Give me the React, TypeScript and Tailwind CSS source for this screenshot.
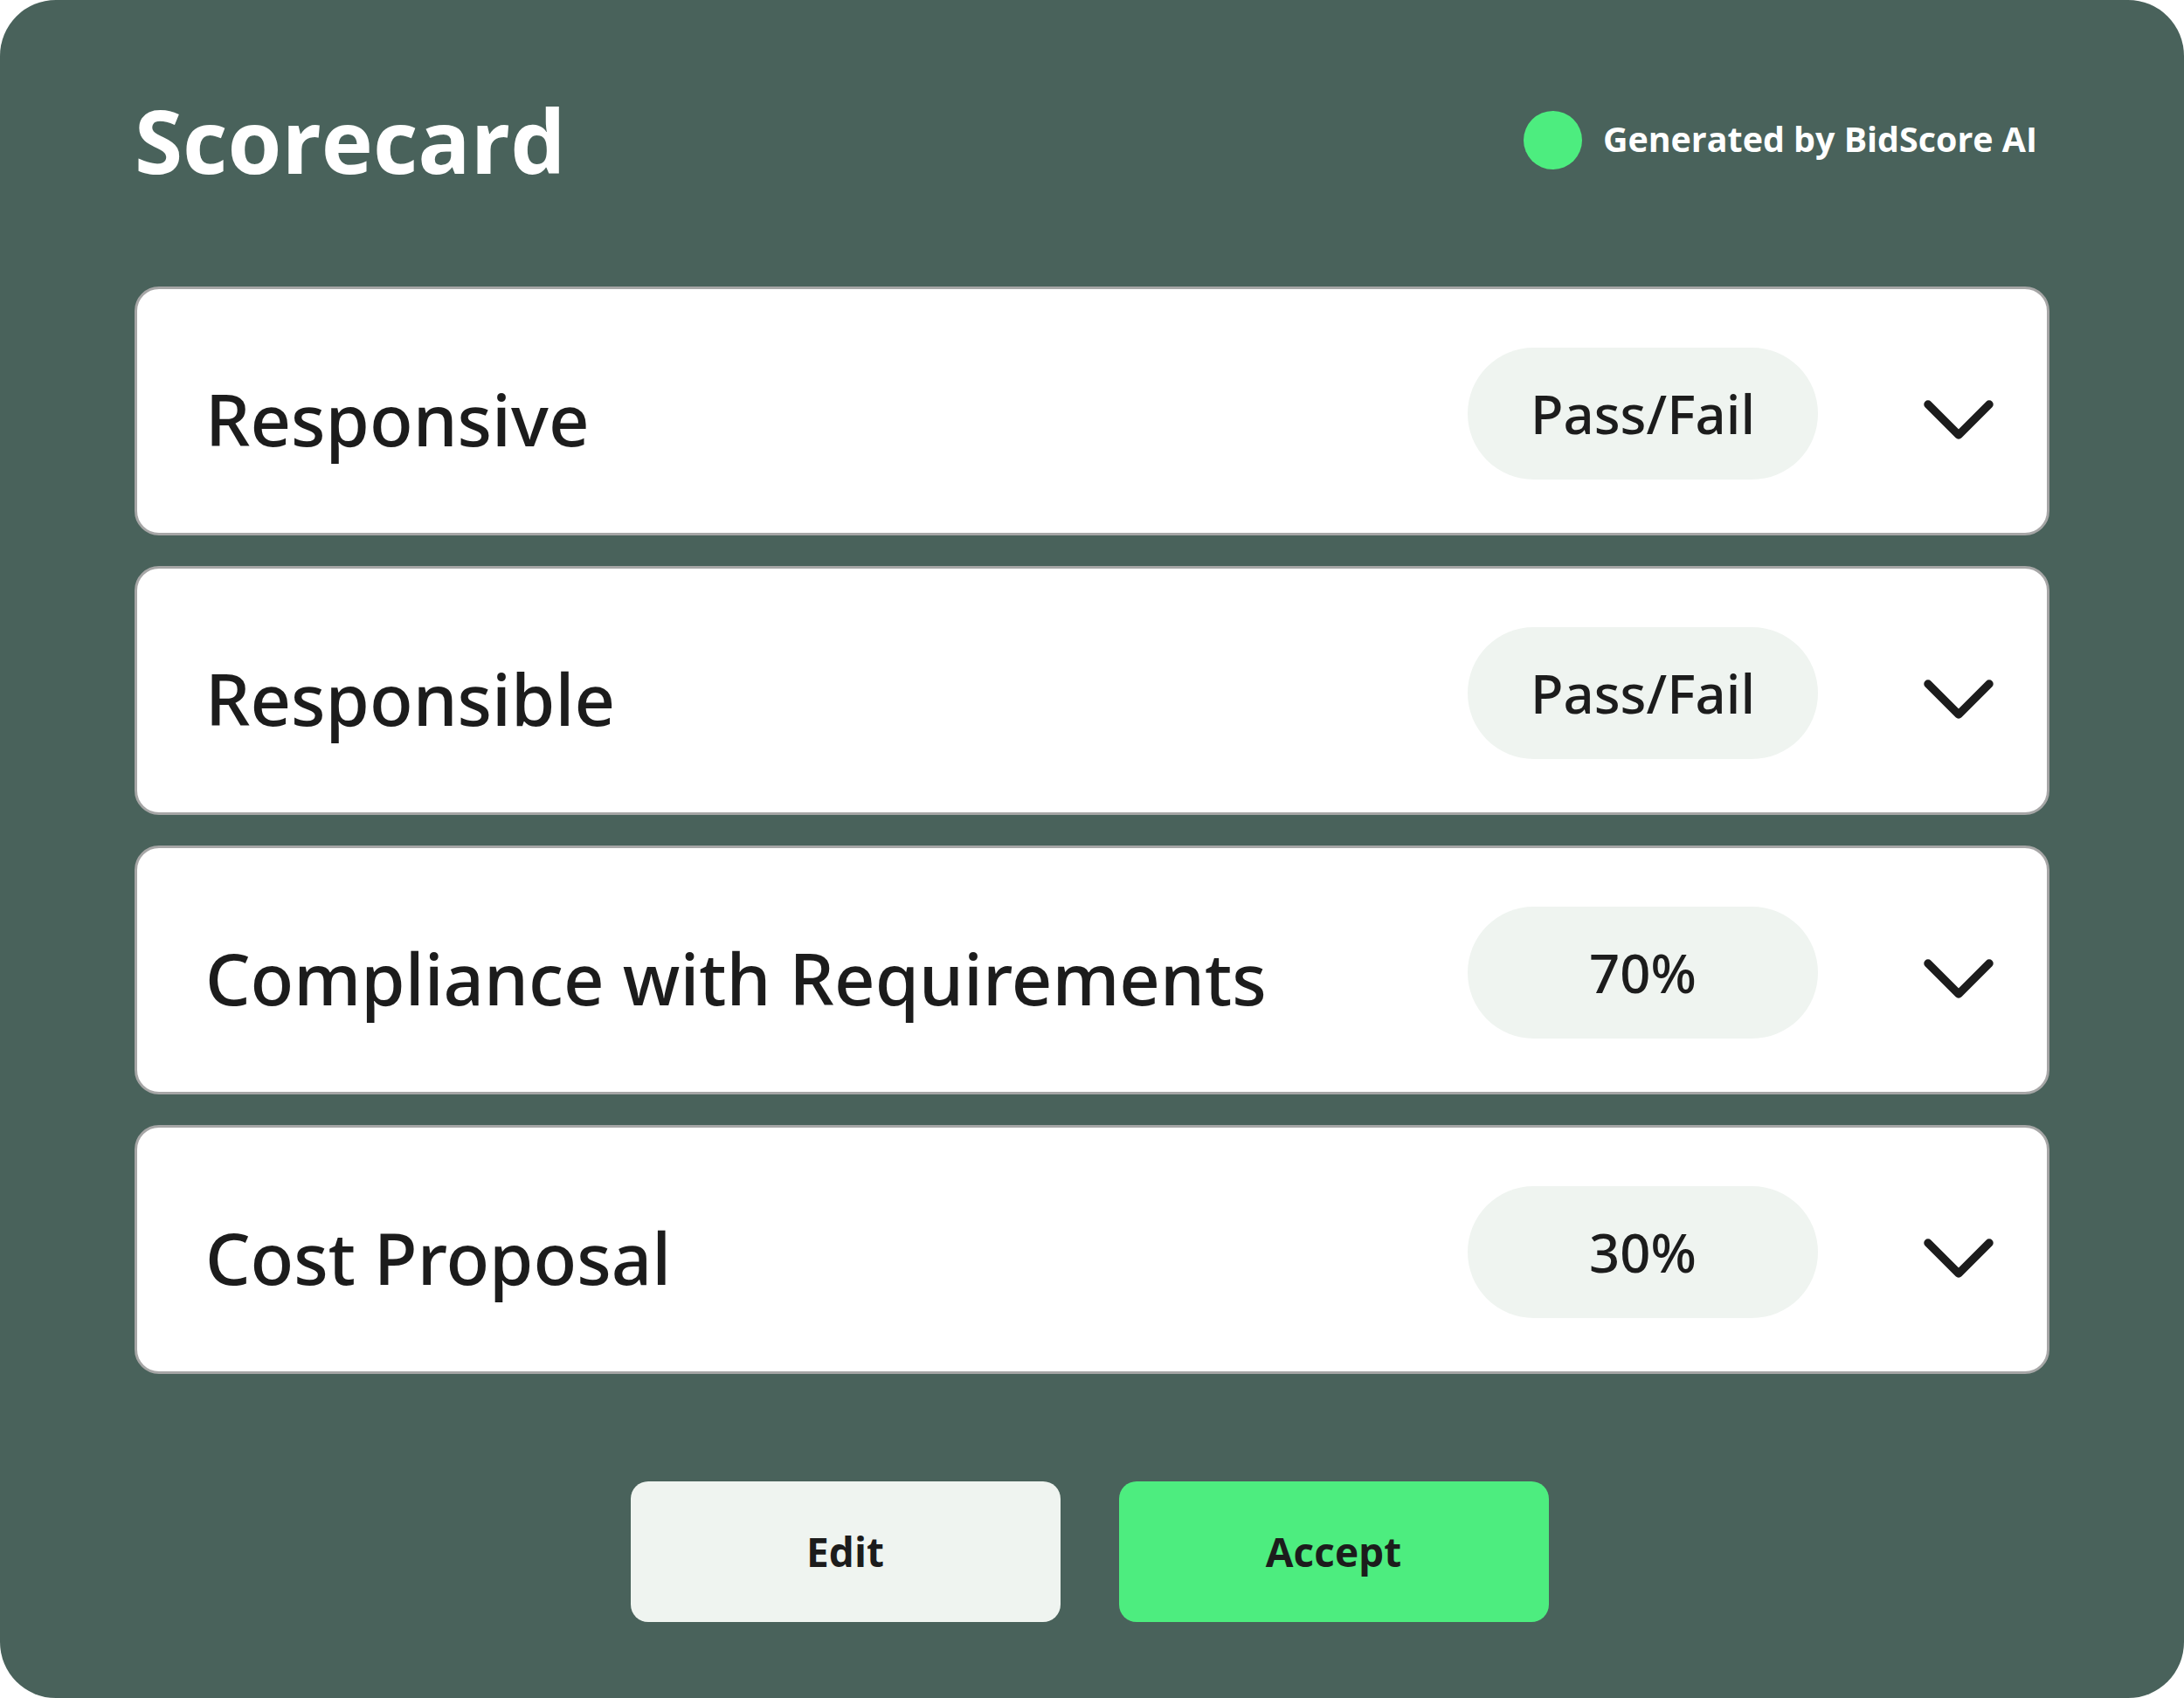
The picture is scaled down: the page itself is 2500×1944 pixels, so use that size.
import React from "react";

type Row = { label: string; value: string };

const rows: Row[] = [
  { label: "Responsive", value: "Pass/Fail" },
  { label: "Responsible", value: "Pass/Fail" },
  { label: "Compliance with Requirements", value: "70%" },
  { label: "Cost Proposal", value: "30%" },
];

function Chevron() {
  return (
    <svg
      width="80"
      height="46"
      viewBox="0 0 80 46"
      fill="none"
      className="mt-[21px] shrink-0"
    >
      <polyline
        points="5,5 40,40 75,5"
        stroke="#1c1c1c"
        strokeWidth="9.5"
        strokeLinecap="round"
        strokeLinejoin="round"
      />
    </svg>
  );
}

function ScoreRow({ label, value }: Row) {
  return (
    <div className="h-[285px] rounded-[28px] border-[3px] border-[#a6a6a6] bg-white flex items-center pl-[78px] pr-[61px]">
      <div className="flex-1 mt-[19px] font-['Noto_Sans',sans-serif] text-[81.3px] leading-none font-medium text-[#1c1c1c] whitespace-nowrap">
        {label}
      </div>
      <div className="mt-[6px] w-[401px] h-[151px] rounded-full bg-[#eff4f0] flex items-center justify-center font-['Noto_Sans',sans-serif] text-[61.5px] leading-none font-medium text-[#1c1c1c] shrink-0">
        {value}
      </div>
      <div className="w-[121px] shrink-0" />
      <Chevron />
    </div>
  );
}

export default function App() {
  return (
    <div className="w-[2500px] h-[1944px] bg-white font-['Open_Sans',sans-serif]">
      <div className="w-full h-full rounded-[64px] bg-[#49625b] px-[154px] pt-[100px] flex flex-col">
        <header className="h-[120px] flex items-center justify-between">
          <h1 className="text-[100px] leading-none font-bold text-white">
            Scorecard
          </h1>
          <div className="flex items-center gap-[24px] mr-[14px]">
            <span className="w-[67px] h-[67px] rounded-full bg-[#4ded7f]" />
            <span className="text-[39.4px] leading-none font-bold text-white">
              Generated by BidScore AI
            </span>
          </div>
        </header>

        <div className="mt-[108px] flex flex-col gap-[35px]">
          {rows.map((r) => (
            <ScoreRow key={r.label} {...r} />
          ))}
        </div>

        <div className="mt-[123px] flex justify-center gap-[67px] pr-[6px]">
          <button className="w-[492px] h-[161px] rounded-[20px] bg-[#eff4f0] text-[46px] font-bold text-[#1c1c1c]">
            Edit
          </button>
          <button className="w-[492px] h-[161px] rounded-[20px] bg-[#4ded7f] text-[46px] font-bold text-[#1c1c1c]">
            Accept
          </button>
        </div>
      </div>
    </div>
  );
}
